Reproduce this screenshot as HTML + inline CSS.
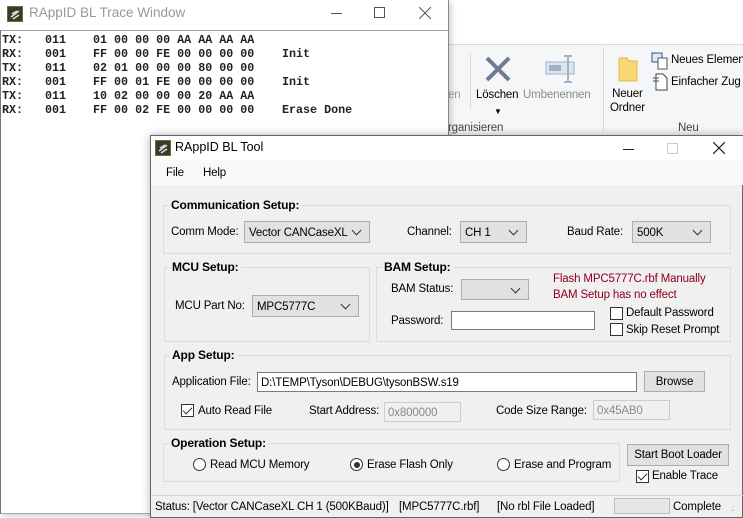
<!DOCTYPE html>
<html><head><meta charset="utf-8">
<style>
*{margin:0;padding:0;box-sizing:border-box}
body{width:743px;height:518px;overflow:hidden;position:relative;background:#fff;font-family:"Liberation Sans",sans-serif;font-size:11.5px;letter-spacing:-0.15px;color:#000}
.a{position:absolute;white-space:nowrap;line-height:16px}
.mono{font-family:"Liberation Mono",monospace;font-size:11.7px;letter-spacing:0;font-weight:bold;color:#222;line-height:14px}
.grp{position:absolute;border:1px solid #dcdcdc}
.gt{position:absolute;font-weight:bold;font-size:12px;background:#f0f0f0;padding:0 2px;top:-8px;left:5px;line-height:15px}
.cb{position:absolute;background:#e1e1e1;border:1px solid #adadad;padding:3px 0 0 4px;line-height:16px}
.cb:after{content:"";position:absolute;right:9px;top:5px;width:6px;height:6px;border-right:1px solid #333;border-bottom:1px solid #333;transform:rotate(45deg)}
.tb{position:absolute;background:#fff;border:1px solid #7a7a7a;padding:2px 0 0 3px;line-height:16px}
.dis{position:absolute;background:#f0f0f0;border:1px solid #ccc;color:#888;padding:2px 0 0 3px;line-height:16px}
.btn{position:absolute;background:#e1e1e1;border:1px solid #adadad;text-align:center;line-height:16px}
.chk{position:absolute;width:13px;height:13px;border:1px solid #333;background:#fff}
.chk.on:after{content:"";position:absolute;left:3px;top:0px;width:4px;height:8px;border-right:1.5px solid #333;border-bottom:1.5px solid #333;transform:rotate(45deg)}
.rad{position:absolute;width:13px;height:13px;border:1px solid #333;border-radius:50%;background:#fff}
.rad.on:after{content:"";position:absolute;left:2.5px;top:2.5px;width:6px;height:6px;border-radius:50%;background:#333}
.red{color:#8b0020}
</style></head><body>
<div class="a" style="left:448px;top:0;width:295px;height:44px;background:#fff"></div>
<div class="a" style="left:448px;top:44px;width:295px;height:92px;background:#f5f6f7;border-top:1px solid #dadbdc"></div>
<div class="a" style="left:470px;top:54px;width:1px;height:55px;background:#dadbdc"></div>
<div class="a" style="left:603px;top:47px;width:1px;height:85px;background:#dadbdc"></div>
<svg class="a" style="left:484px;top:55px" width="28" height="28"><path d="M3 3L25 25M25 3L3 25" stroke="#6d7b93" stroke-width="4"/></svg>
<svg class="a" style="left:544px;top:54px" width="34" height="30"><rect x="2" y="8" width="28" height="12" fill="#dde5ee" stroke="#9fb2c8"/><rect x="5" y="11" width="12" height="6" fill="#9fb2c8"/><path d="M20 2h8M24 2v26M20 28h8" stroke="#9fb2c8" stroke-width="2" fill="none"/></svg>
<div class="a" style="left:448px;top:87px;color:#999">en</div>
<div class="a" style="left:476px;top:87px">Löschen</div>
<div class="a" style="left:523px;top:87px;color:#8a8a8a">Umbenennen</div>
<div class="a" style="left:494px;top:104px;font-size:8px">▼</div>
<div class="a" style="left:448px;top:120px;color:#444">rganisieren</div>
<svg class="a" style="left:617px;top:55px" width="22" height="28"><path d="M2 3h8l2 3h8v20H2z" fill="#f8d775" stroke="#e4b84a"/></svg>
<div class="a" style="left:610px;top:87px;line-height:14px;text-align:center">Neuer<br>Ordner</div>
<svg class="a" style="left:651px;top:52px" width="18" height="18"><rect x="1" y="1" width="10" height="9" fill="#dfe8f5" stroke="#2b5797"/><rect x="7" y="6" width="9" height="11" fill="#fff" stroke="#555"/></svg>
<div class="a" style="left:671px;top:52px">Neues Elemen</div>
<svg class="a" style="left:652px;top:73px" width="16" height="18"><path d="M4 1h7l4 4v12H4z" fill="#fff" stroke="#444"/><path d="M1 5h6M1 8h6" stroke="#2b5797"/></svg>
<div class="a" style="left:671px;top:74px">Einfacher Zug</div>
<div class="a" style="left:678px;top:120px;color:#444">Neu</div>

<div class="a" style="left:0;top:0;width:449px;height:514px;background:#fff;border-right:1px solid #888;border-bottom:1px solid #aaa;box-shadow:2px 2px 6px rgba(0,0,0,.2)"></div>
<div class="a" style="left:0;top:30px;width:449px;height:1px;background:#a0a0a0"></div>
<div class="a" style="left:0;top:30px;width:1px;height:484px;background:#777"></div>
<div class="a" style="left:7px;top:6px;width:16px;height:16px;background:#3a3a2a;border:1px solid #6b6b3a"><svg width="14" height="14"><path d="M3 10l8-6M4 7l5-3M5 12l6-4" stroke="#ddd" stroke-width="1.5"/></svg></div>
<div class="a" style="left:29px;top:5px;font-size:13.5px;color:#999;letter-spacing:0">RAppID BL Trace Window</div>
<div class="a" style="left:331px;top:13px;width:11px;height:1px;background:#555"></div>
<div class="a" style="left:374px;top:7px;width:11px;height:11px;border:1px solid #555"></div>
<svg class="a" style="left:419px;top:7px" width="12" height="12"><path d="M0 0L12 12M12 0L0 12" stroke="#555"/></svg>
<div class="a mono" style="left:2px;top:33px">TX:<br>RX:<br>TX:<br>RX:<br>TX:<br>RX:</div>
<div class="a mono" style="left:45px;top:33px">011<br>001<br>011<br>001<br>011<br>001</div>
<div class="a mono" style="left:93px;top:33px">01 00 00 00 AA AA AA AA<br>FF 00 00 FE 00 00 00 00<br>02 01 00 00 00 80 00 00<br>FF 00 01 FE 00 00 00 00<br>10 02 00 00 00 20 AA AA<br>FF 00 02 FE 00 00 00 00</div>
<div class="a mono" style="left:282px;top:33px">&nbsp;<br>Init<br>&nbsp;<br>Init<br>&nbsp;<br>Erase Done</div>

<div class="a" style="left:150px;top:135px;width:593px;height:383px;background:#f0f0f0;border:1px solid #666;box-shadow:0 0 8px rgba(0,0,0,.3)"></div>
<div class="a" style="left:151px;top:136px;width:592px;height:24px;background:#fff"></div>
<div class="a" style="left:151px;top:160px;width:592px;height:25px;background:#f9f9f9"></div>
<div class="a" style="left:155px;top:140px;width:16px;height:16px;background:#3a3a2a;border:1px solid #6b6b3a"><svg width="14" height="14"><path d="M3 10l8-6M4 7l5-3M5 12l6-4" stroke="#ddd" stroke-width="1.5"/></svg></div>
<div class="a" style="left:175px;top:139px;font-size:12.5px;letter-spacing:0">RAppID BL Tool</div>
<div class="a" style="left:623px;top:149px;width:11px;height:1px;background:#222"></div>
<div class="a" style="left:667px;top:143px;width:11px;height:11px;border:1px solid #ccc"></div>
<svg class="a" style="left:713px;top:142px" width="12" height="12"><path d="M0 0L12 12M12 0L0 12" stroke="#222" stroke-width="1.2"/></svg>
<div class="a" style="left:166px;top:165px">File</div>
<div class="a" style="left:203px;top:165px">Help</div>

<div class="grp" style="left:163px;top:205px;width:568px;height:49px"><div class="gt">Communication Setup:</div></div>
<div class="a" style="left:171px;top:224px">Comm Mode:</div>
<div class="cb" style="left:244px;top:221px;width:126px;height:22px">Vector CANCaseXL</div>
<div class="a" style="left:407px;top:224px">Channel:</div>
<div class="cb" style="left:460px;top:221px;width:67px;height:22px">CH 1</div>
<div class="a" style="left:567px;top:224px">Baud Rate:</div>
<div class="cb" style="left:632px;top:221px;width:79px;height:22px">500K</div>

<div class="grp" style="left:164px;top:267px;width:206px;height:75px"><div class="gt">MCU Setup:</div></div>
<div class="a" style="left:175px;top:298px">MCU Part No:</div>
<div class="cb" style="left:252px;top:295px;width:107px;height:22px">MPC5777C</div>
<div class="grp" style="left:376px;top:267px;width:355px;height:75px"><div class="gt">BAM Setup:</div></div>
<div class="a" style="left:391px;top:281px">BAM Status:</div>
<div class="cb" style="left:461px;top:279px;width:68px;height:21px"></div>
<div class="a red" style="left:553px;top:271px">Flash MPC5777C.rbf Manually</div>
<div class="a red" style="left:553px;top:287px">BAM Setup has no effect</div>
<div class="a" style="left:391px;top:313px">Password:</div>
<div class="tb" style="left:451px;top:311px;width:144px;height:19px"></div>
<div class="chk" style="left:610px;top:307px"></div>
<div class="a" style="left:626px;top:305px">Default Password</div>
<div class="chk" style="left:610px;top:323px"></div>
<div class="a" style="left:626px;top:322px">Skip Reset Prompt</div>

<div class="grp" style="left:164px;top:355px;width:567px;height:75px"><div class="gt">App Setup:</div></div>
<div class="a" style="left:172px;top:374px">Application File:</div>
<div class="tb" style="left:257px;top:372px;width:380px;height:20px">D:\TEMP\Tyson\DEBUG\tysonBSW.s19</div>
<div class="btn" style="left:644px;top:371px;width:61px;height:21px;padding-top:2px">Browse</div>
<div class="chk on" style="left:181px;top:404px"></div>
<div class="a" style="left:198px;top:403px">Auto Read File</div>
<div class="a" style="left:309px;top:403px">Start Address:</div>
<div class="dis" style="left:384px;top:402px;width:77px;height:20px">0x800000</div>
<div class="a" style="left:496px;top:403px">Code Size Range:</div>
<div class="dis" style="left:593px;top:400px;width:77px;height:20px">0x45AB0</div>

<div class="grp" style="left:163px;top:443px;width:457px;height:39px"><div class="gt">Operation Setup:</div></div>
<div class="rad" style="left:193px;top:458px"></div>
<div class="a" style="left:210px;top:457px">Read MCU Memory</div>
<div class="rad on" style="left:350px;top:458px"></div>
<div class="a" style="left:367px;top:457px">Erase Flash Only</div>
<div class="rad" style="left:497px;top:458px"></div>
<div class="a" style="left:514px;top:457px">Erase and Program</div>
<div class="btn" style="left:627px;top:444px;width:102px;height:22px;padding-top:2px">Start Boot Loader</div>
<div class="chk on" style="left:636px;top:470px"></div>
<div class="a" style="left:652px;top:468px">Enable Trace</div>

<div class="a" style="left:151px;top:495px;width:592px;height:1px;background:#d5d5d5"></div>
<div class="a" style="left:155px;top:499px">Status: [Vector CANCaseXL CH 1 (500KBaud)]</div>
<div class="a" style="left:399px;top:499px">[MPC5777C.rbf]</div>
<div class="a" style="left:497px;top:499px">[No rbl File Loaded]</div>
<div class="a" style="left:614px;top:498px;width:56px;height:16px;background:#e6e6e6;border:1px solid #bcbcbc"></div>
<div class="a" style="left:673px;top:499px">Complete</div>
<div class="a" style="left:731px;top:500px;font-size:9px;color:#999;letter-spacing:-1px">.:</div>
</body></html>
